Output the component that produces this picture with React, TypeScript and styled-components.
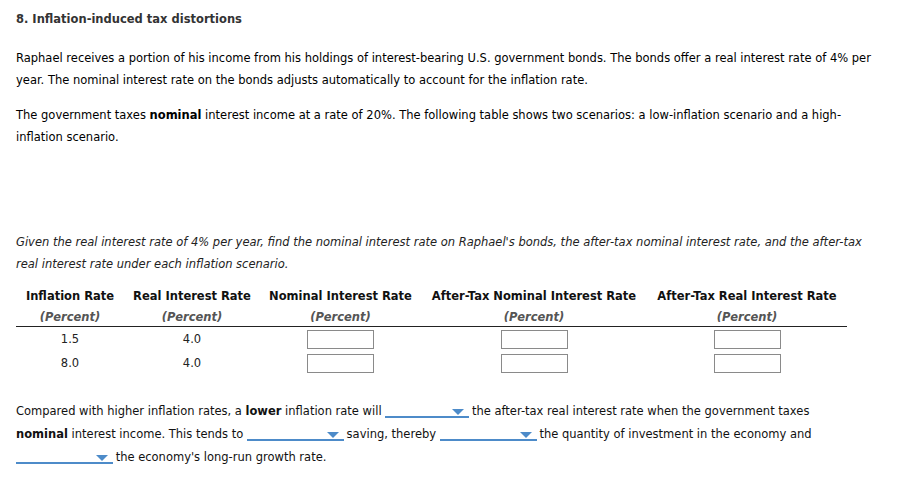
import styled, { createGlobalStyle } from "styled-components";

const GlobalStyle = createGlobalStyle`
  html, body {
    margin: 0;
    padding: 0;
    background: #fff;
  }
  body {
    font-family: "DejaVu Sans", Verdana, sans-serif;
    font-size: 11.5px;
    color: #000;
  }
`;

const Page = styled.div`
  padding: 11px 16px 0 16px;
  width: 868px;
`;

const Title = styled.h2`
  margin: 0;
  font-size: 11.5px;
  font-weight: bold;
  color: #333;
  line-height: 16px;
`;

const Para = styled.p<{ gap: number }>`
  margin: ${(p) => p.gap}px 0 0 0;
  line-height: 21.5px;
`;

const Instruction = styled(Para)`
  font-style: italic;
  color: #222;
`;

const Table = styled.table`
  margin-top: 10px;
  border-collapse: collapse;
  width: 831px;
  table-layout: fixed;
`;

const HeadCell = styled.th`
  font-weight: bold;
  font-size: 11.5px;
  text-align: center;
  padding: 0;
  height: 22px;
  white-space: nowrap;
  color: #111;
`;

const UnitCell = styled.th`
  font-weight: bold;
  font-style: italic;
  color: #555;
  text-align: center;
  padding: 0;
  height: 19px;
  border-bottom: 1.5px solid #222;
`;

const Cell = styled.td`
  text-align: center;
  padding: 0;
  height: 24px;
  color: #222;
`;

const InputBox = styled.span`
  display: inline-block;
  width: 65px;
  height: 17px;
  border: 1.5px solid #8a8a8a;
  vertical-align: middle;
`;

const Question = styled.p`
  margin: 25px 0 0 0;
  width: 840px;
  line-height: 23px;
  color: #111;
`;

const Drop = styled.span<{ w: number }>`
  display: inline-block;
  position: relative;
  width: ${(p) => p.w}px;
  height: 14px;
  border-bottom: 2px solid #4d8bc9;
  vertical-align: -3px;
  margin: 0 -1px 0 0;
`;

const Arrow = styled.span`
  position: absolute;
  right: 5px;
  bottom: 1px;
  width: 0;
  height: 0;
  border-left: 6px solid transparent;
  border-right: 6px solid transparent;
  border-top: 6px solid #4d8bc9;
`;

function Dropdown({ w }: { w: number }) {
  return (
    <Drop w={w}>
      <Arrow />
    </Drop>
  );
}

const rows = [
  { inflation: "1.5", real: "4.0" },
  { inflation: "8.0", real: "4.0" },
];

export default function App() {
  return (
    <>
      <GlobalStyle />
      <Page>
        <Title>8. Inflation-induced tax distortions</Title>
        <Para gap={21}>
          Raphael receives a portion of his income from his holdings of interest-bearing U.S. government bonds. The
          bonds offer a real interest rate of 4% per year. The nominal interest rate on the bonds adjusts automatically
          to account for the inflation rate.
        </Para>
        <Para gap={14}>
          The government taxes <b>nominal</b> interest income at a rate of 20%. The following table shows two
          scenarios: a low-inflation scenario and a high-inflation scenario.
        </Para>
        <Instruction gap={84}>
          Given the real interest rate of 4% per year, find the nominal interest rate on Raphael's bonds, the after-tax
          nominal interest rate, and the after-tax real interest rate under each inflation scenario.
        </Instruction>
        <Table>
          <colgroup>
            <col style={{ width: 108 }} />
            <col style={{ width: 136 }} />
            <col style={{ width: 161 }} />
            <col style={{ width: 226 }} />
            <col style={{ width: 200 }} />
          </colgroup>
          <thead>
            <tr>
              <HeadCell>Inflation Rate</HeadCell>
              <HeadCell>Real Interest Rate</HeadCell>
              <HeadCell>Nominal Interest Rate</HeadCell>
              <HeadCell>After-Tax Nominal Interest Rate</HeadCell>
              <HeadCell>After-Tax Real Interest Rate</HeadCell>
            </tr>
            <tr>
              <UnitCell>(Percent)</UnitCell>
              <UnitCell>(Percent)</UnitCell>
              <UnitCell>(Percent)</UnitCell>
              <UnitCell>(Percent)</UnitCell>
              <UnitCell>(Percent)</UnitCell>
            </tr>
          </thead>
          <tbody>
            {rows.map((r, i) => (
              <tr key={i}>
                <Cell>{r.inflation}</Cell>
                <Cell>{r.real}</Cell>
                <Cell>
                  <InputBox />
                </Cell>
                <Cell>
                  <InputBox />
                </Cell>
                <Cell>
                  <InputBox />
                </Cell>
              </tr>
            ))}
          </tbody>
        </Table>
        <Question>
          Compared with higher inflation rates, a <b>lower</b> inflation rate will <Dropdown w={84} /> the after-tax
          real interest rate when the government taxes <b>nominal</b> interest income. This tends to{" "}
          <Dropdown w={97} /> saving, thereby <Dropdown w={97} /> the quantity of investment in the economy and{" "}
          <Dropdown w={97} /> the economy's long-run growth rate.
        </Question>
      </Page>
    </>
  );
}
